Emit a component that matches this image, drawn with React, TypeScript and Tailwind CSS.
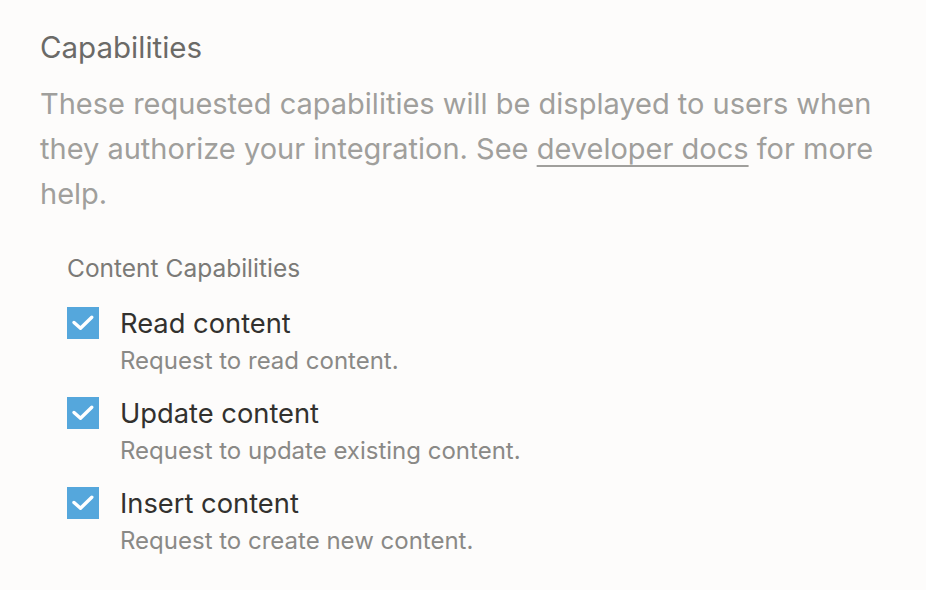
import * as React from "react";

const items = [
  { label: "Read content", description: "Request to read content." },
  { label: "Update content", description: "Request to update existing content." },
  { label: "Insert content", description: "Request to create new content." },
];

function Check() {
  return (
    <div className="flex size-8 shrink-0 items-center justify-center bg-[#55a7dc]">
      <svg viewBox="0 0 32 32" className="size-8" fill="none">
        <path d="M7 15.5l6.5 5.8L24.8 10.3" stroke="#fff" strokeWidth="3.4" strokeLinecap="round" strokeLinejoin="round" />
      </svg>
    </div>
  );
}

export default function App() {
  return (
    <div
      className="min-h-screen w-full bg-[#fdfcfb] pl-10 pr-[20px] pt-[28px]"
      style={{ fontFamily: "Inter, 'Noto Sans', sans-serif" }}
    >
      <h2 className="text-[29.5px] leading-[38px] text-[#6b6a67]">Capabilities</h2>
      <p className="mt-[15px] text-[29px] leading-[45px] text-[#a09f9c]">
        These requested capabilities will be displayed to users when they authorize your integration. See{" "}
        <a href="#" className="underline decoration-[#a09f9c] decoration-2 underline-offset-[6px]">developer docs</a> for more
        help.
      </p>
      <div className="mt-[37px] pl-[27px]">
        <div className="text-[24.5px] leading-[30px] text-[#7b7a77]">Content Capabilities</div>
        <div className="mt-[22px] flex flex-col gap-[17px]">
          {items.map((item) => (
            <div key={item.label} className="flex items-start gap-[21px]">
              <div className="pt-[2px]">
                <Check />
              </div>
              <div>
                <div className="text-[27.3px] leading-[38px] text-[#32312e]">{item.label}</div>
                <div className="mt-[1px] text-[24px] leading-[34px] text-[#8a8986]">{item.description}</div>
              </div>
            </div>
          ))}
        </div>
      </div>
    </div>
  );
}
